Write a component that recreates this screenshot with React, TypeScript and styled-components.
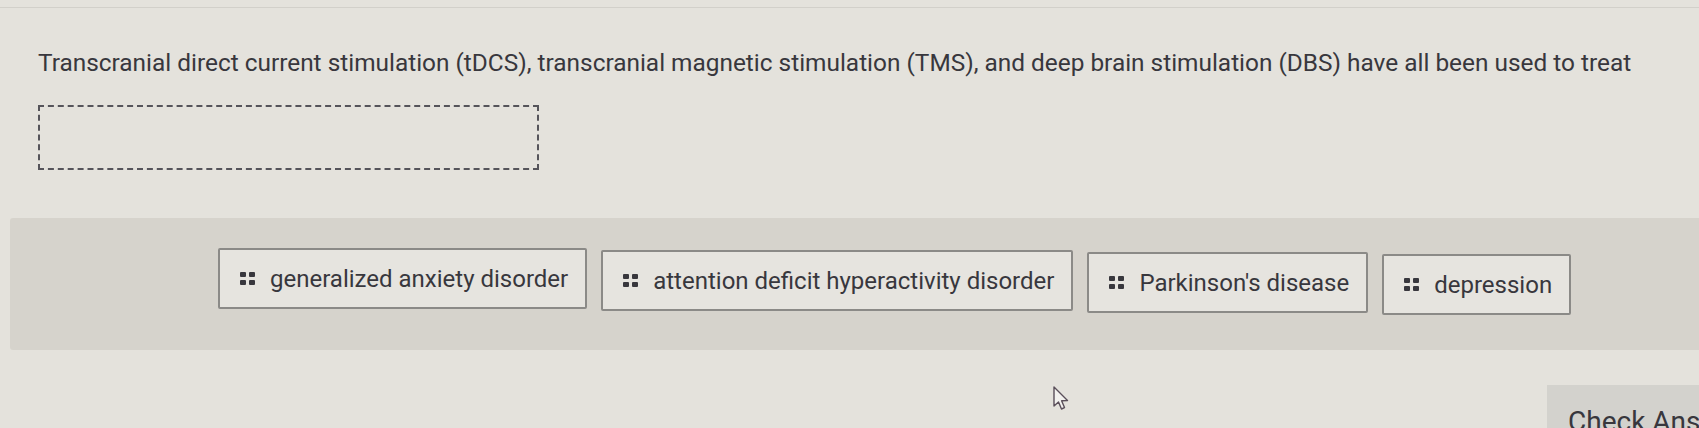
import styled, { createGlobalStyle } from 'styled-components';

const GlobalStyle = createGlobalStyle`
    html, body {
        margin: 0;
        padding: 0;
        background: #e4e2dc;
        overflow: hidden;
    }
    body {
        font-family: Roboto, 'Liberation Sans', sans-serif;
        color: #3b3a40;
    }
`;

const Page = styled.div`
    position: relative;
    width: 1699px;
    height: 428px;
    overflow: hidden;
    padding-top: 7px;
    box-sizing: border-box;
`;

const Frame = styled.div`
    border-top: 1px solid #d2d0ca;
    padding-top: 40px;
`;

const Question = styled.p`
    margin: 0 0 0 38px;
    font-size: 24.4px;
    line-height: 30px;
    color: #38373d;
    white-space: nowrap;
`;

const DropZone = styled.div`
    margin: 27px 0 0 38px;
    width: 501px;
    height: 65px;
    box-sizing: border-box;
    border: 2px dashed #55545a;
`;

const Band = styled.div`
    margin: 48px 0 0 10px;
    height: 132px;
    box-sizing: border-box;
    background: #d6d3cc;
    border-radius: 3px 0 0 3px;
    display: flex;
    align-items: flex-start;
    gap: 14px;
    padding: 30px 0 0 208px;
`;

const Chip = styled.div<{ drop: number }>`
    display: flex;
    align-items: center;
    gap: 15px;
    height: 61px;
    box-sizing: border-box;
    margin-top: ${(p) => p.drop}px;
    padding: 0 17px 0 20px;
    background: #e6e4df;
    border: 2px solid #8b8a87;
    border-radius: 2px;
    font-size: 24px;
    color: #38373d;
    white-space: nowrap;
`;

const Grip = styled.span`
    display: grid;
    grid-template-columns: 6px 6px;
    grid-auto-rows: 5px;
    gap: 3px 3px;

    i {
        background: #38373d;
        border-radius: 1px;
    }
`;

const Footer = styled.div`
    display: flex;
    justify-content: flex-end;
    margin-top: 35px;
`;

const CheckButton = styled.button`
    width: 240px;
    margin-right: -88px;
    height: 60px;
    border: none;
    background: #d3d2cd;
    padding: 12px 0 0 21px;
    font-family: Roboto, 'Liberation Sans', sans-serif;
    font-size: 28px;
    color: #38373d;
    display: flex;
    align-items: center;
    white-space: nowrap;
`;

const Cursor = styled.svg`
    position: absolute;
    left: 1052px;
    top: 385px;
`;

const options = [
    { label: 'generalized anxiety disorder', drop: 0 },
    { label: 'attention deficit hyperactivity disorder', drop: 2 },
    { label: "Parkinson's disease", drop: 4 },
    { label: 'depression', drop: 6 },
];

export default function App() {
    return (
        <Page>
            <GlobalStyle />
            <Frame>
                <Question>
                    Transcranial direct current stimulation (tDCS), transcranial magnetic stimulation (TMS), and deep brain
                    stimulation (DBS) have all been used to treat
                </Question>
                <DropZone />
                <Band>
                    {options.map((o) => (
                        <Chip key={o.label} drop={o.drop}>
                            <Grip>
                                <i />
                                <i />
                                <i />
                                <i />
                            </Grip>
                            <span>{o.label}</span>
                        </Chip>
                    ))}
                </Band>
                <Footer>
                    <CheckButton>Check Answer</CheckButton>
                </Footer>
            </Frame>
            <Cursor width="18" height="28" viewBox="0 0 18 28">
                <path
                    d="M2 2 L2 21 L6.5 17 L9.5 24 L12.5 22.6 L9.6 15.8 L15.5 15.5 Z"
                    fill="#f2f1ee"
                    stroke="#5a4f5a"
                    strokeWidth="1.4"
                    strokeLinejoin="round"
                />
            </Cursor>
        </Page>
    );
}
